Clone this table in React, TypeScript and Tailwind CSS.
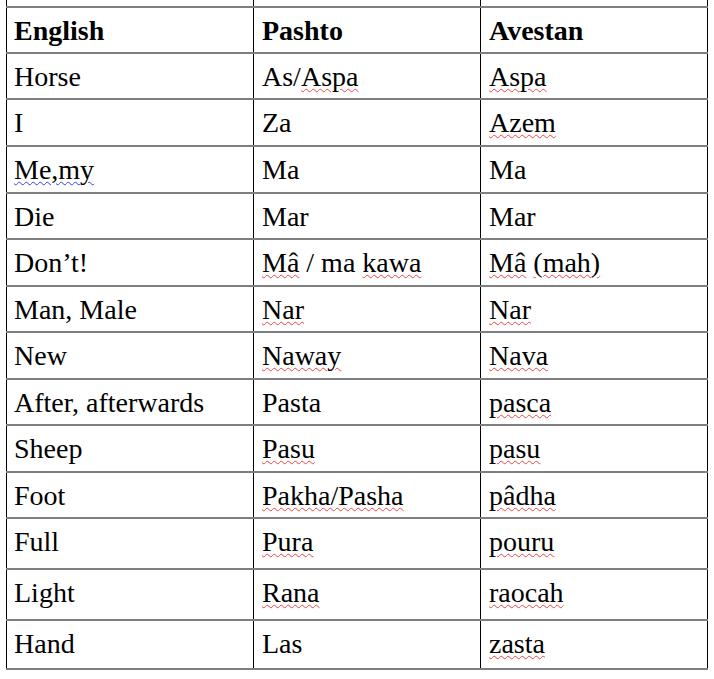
type Part = { t: string; s?: 'red' | 'blue' };
type Cell = Part[];

const rows: { h: number; cells: Cell[] }[] = [
  { h: 46, cells: [[{ t: 'Horse' }], [{ t: 'As/' }, { t: 'Aspa', s: 'red' }], [{ t: 'Aspa', s: 'red' }]] },
  { h: 47, cells: [[{ t: 'I' }], [{ t: 'Za' }], [{ t: 'Azem', s: 'red' }]] },
  { h: 47, cells: [[{ t: 'Me,my', s: 'blue' }], [{ t: 'Ma' }], [{ t: 'Ma' }]] },
  { h: 46, cells: [[{ t: 'Die' }], [{ t: 'Mar' }], [{ t: 'Mar' }]] },
  {
    h: 47,
    cells: [
      [{ t: 'Don’t!' }],
      [{ t: 'Mâ', s: 'red' }, { t: ' / ma ' }, { t: 'kawa', s: 'red' }],
      [{ t: 'Mâ', s: 'red' }, { t: ' ' }, { t: '(mah)', s: 'red' }],
    ],
  },
  { h: 46, cells: [[{ t: 'Man, Male' }], [{ t: 'Nar', s: 'red' }], [{ t: 'Nar', s: 'red' }]] },
  { h: 47, cells: [[{ t: 'New' }], [{ t: 'Naway', s: 'red' }], [{ t: 'Nava', s: 'red' }]] },
  { h: 46, cells: [[{ t: 'After, afterwards' }], [{ t: 'Pasta' }], [{ t: 'pasca', s: 'red' }]] },
  { h: 47, cells: [[{ t: 'Sheep' }], [{ t: 'Pasu', s: 'red' }], [{ t: 'pasu', s: 'red' }]] },
  { h: 46, cells: [[{ t: 'Foot' }], [{ t: 'Pakha/Pasha', s: 'red' }], [{ t: 'pâdha', s: 'red' }]] },
  { h: 51, cells: [[{ t: 'Full' }], [{ t: 'Pura', s: 'red' }], [{ t: 'pouru', s: 'red' }]] },
  { h: 51, cells: [[{ t: 'Light' }], [{ t: 'Rana', s: 'red' }], [{ t: 'raocah', s: 'red' }]] },
  { h: 49, cells: [[{ t: 'Hand' }], [{ t: 'Las' }], [{ t: 'zasta', s: 'red' }]] },
];

const widths = ['w-[247px] pl-[7px]', 'w-[227px] pl-[8px]', 'w-[228px] pl-[8px] border-r'];

function Text({ cell }: { cell: Cell }) {
  return (
    <>
      {cell.map((p, i) =>
        p.s ? (
          <span
            key={i}
            className={
              p.s === 'red'
                ? 'underline decoration-wavy decoration-[#ee4444] decoration-1 underline-offset-[2px]'
                : 'underline decoration-wavy decoration-[#3344dd] decoration-1 underline-offset-[2px]'
            }
          >
            {p.t}
          </span>
        ) : (
          <span key={i}>{p.t}</span>
        ),
      )}
    </>
  );
}

export default function App() {
  return (
    <div className="w-[714px] h-[679px] bg-white pl-[6px] text-black [font-family:'Liberation_Serif',serif] text-[28px] leading-[30px]">
      <div className="w-[702px]">
        {/* cut-off row above the header */}
        <div className="flex h-[8px] border-b-2 border-[#7f7f7f]">
          {widths.map((w, i) => (
            <div key={i} className={`${w} border-l border-black`} />
          ))}
        </div>

        {/* header */}
        <div className="flex h-[46px] border-b-2 border-[#7f7f7f]">
          {['English', 'Pashto', 'Avestan'].map((h, i) => (
            <div key={h} className={`${widths[i]} border-l border-black pt-[8px] font-bold`}>
              {h}
            </div>
          ))}
        </div>

        {rows.map((r, ri) => (
          <div key={ri} className="flex border-b-2 border-[#7f7f7f]" style={{ height: r.h }}>
            {r.cells.map((c, ci) => (
              <div key={ci} className={`${widths[ci]} border-l border-black pt-[8px] whitespace-nowrap`}>
                <Text cell={c} />
              </div>
            ))}
          </div>
        ))}
      </div>
    </div>
  );
}
